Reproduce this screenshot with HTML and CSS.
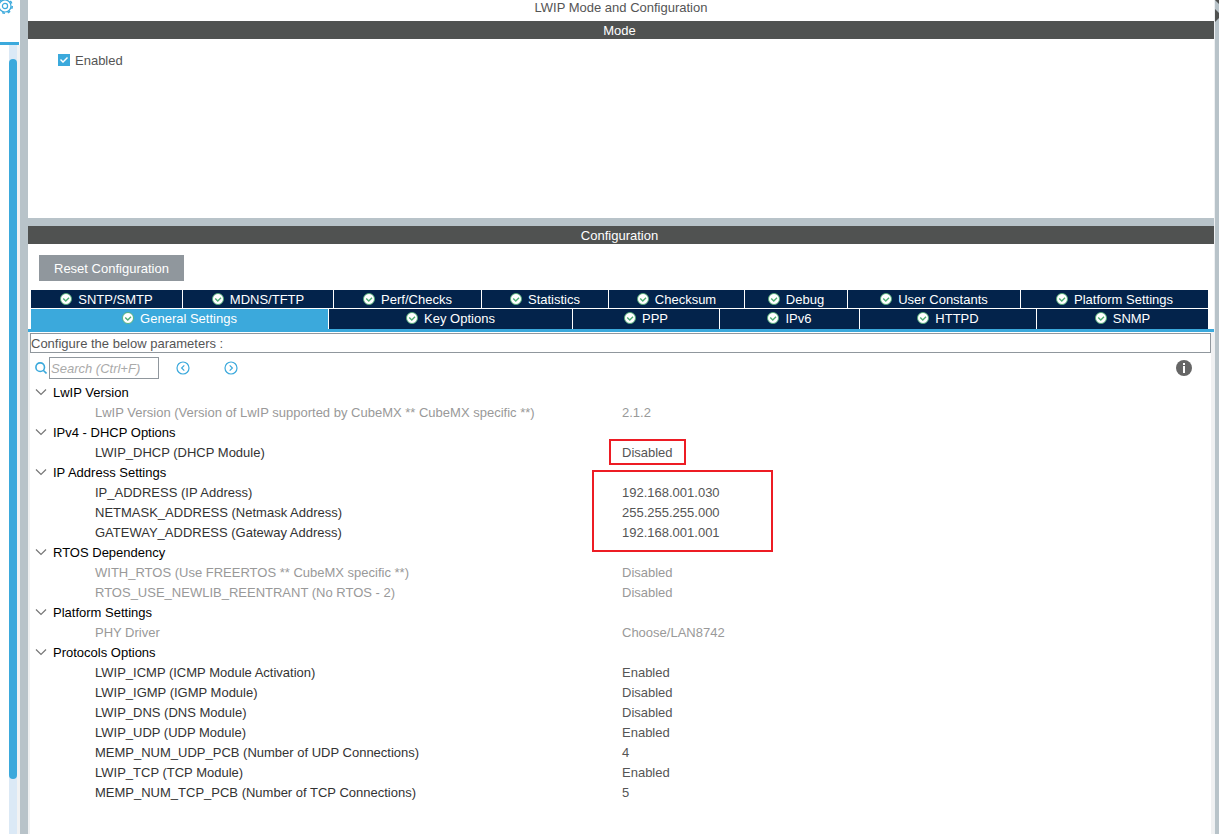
FILE: index.html
```html
<!DOCTYPE html>
<html lang="en">
<head>
  <meta charset="utf-8">
  <meta name="viewport" content="width=device-width, initial-scale=1.0">
  <title>LWIP Mode and Configuration</title>
  <link rel="stylesheet" href="styles.css">
</head>
<body>
  <!-- shared icons -->
  <svg class="defs" width="0" height="0" aria-hidden="true">
    <symbol id="ok" viewBox="0 0 12 12">
      <circle cx="6" cy="6" r="5.5" fill="#fff" stroke="#4fae74" stroke-width="0.9"/>
      <path d="M3.2 5.4l2.6 2.6L9 4.8" fill="none" stroke="#4fae74" stroke-width="1.4"/>
    </symbol>
    <symbol id="chevron" viewBox="0 0 12 8">
      <path d="M1 1.5l5 5 5-5" fill="none" stroke="#777" stroke-width="1.2"/>
    </symbol>
  </svg>

  <aside class="side">
    <div class="side-top">
      <svg width="14" height="15" viewBox="0 0 14 15" fill="none" stroke="#3ba9dc">
        <circle cx="5" cy="6" r="2.6" stroke-width="1.2"/>
        <circle cx="5" cy="6" r="6" stroke-width="1.2"/>
        <circle cx="5" cy="6" r="7.2" stroke-width="1.6" stroke-dasharray="2.8 2.85"/>
      </svg>
    </div>
    <div class="scroll-track"><div class="scroll-thumb"></div></div>
  </aside>

  <main>
    <h1>LWIP Mode and Configuration</h1>

    <!-- Mode -->
    <section class="mode">
      <h2>Mode</h2>
      <label class="check"><input type="checkbox" checked>Enabled</label>
    </section>

    <!-- Configuration -->
    <section class="config">
      <h2>Configuration</h2>
      <button class="reset">Reset Configuration</button>

      <div class="tabs" role="tablist">
        <div class="tab-row tab-row-back">
          <button role="tab"><svg class="ok"><use href="#ok"/></svg>SNTP/SMTP</button>
          <button role="tab"><svg class="ok"><use href="#ok"/></svg>MDNS/TFTP</button>
          <button role="tab"><svg class="ok"><use href="#ok"/></svg>Perf/Checks</button>
          <button role="tab"><svg class="ok"><use href="#ok"/></svg>Statistics</button>
          <button role="tab"><svg class="ok"><use href="#ok"/></svg>Checksum</button>
          <button role="tab"><svg class="ok"><use href="#ok"/></svg>Debug</button>
          <button role="tab"><svg class="ok"><use href="#ok"/></svg>User Constants</button>
          <button role="tab"><svg class="ok"><use href="#ok"/></svg>Platform Settings</button>
        </div>
        <div class="tab-row tab-row-front">
          <button role="tab" class="active" aria-selected="true"><svg class="ok"><use href="#ok"/></svg>General Settings</button>
          <button role="tab"><svg class="ok"><use href="#ok"/></svg>Key Options</button>
          <button role="tab"><svg class="ok"><use href="#ok"/></svg>PPP</button>
          <button role="tab"><svg class="ok"><use href="#ok"/></svg>IPv6</button>
          <button role="tab"><svg class="ok"><use href="#ok"/></svg>HTTPD</button>
          <button role="tab"><svg class="ok"><use href="#ok"/></svg>SNMP</button>
        </div>
      </div>

      <div class="panel">
        <p class="hint">Configure the below parameters :</p>

        <div class="toolbar">
          <label for="search" aria-label="Search">
            <svg width="12" height="12" viewBox="0 0 12 12" fill="none" stroke="#3ba9dc" stroke-width="1.6">
              <circle cx="5.2" cy="5.2" r="4.3"/><path d="M8.2 8.2l3.3 3.3"/>
            </svg>
          </label>
          <input type="text" id="search" placeholder="Search (Ctrl+F)">
          <button class="prev" aria-label="Previous">
            <svg width="14" height="14" viewBox="0 0 14 14" fill="none" stroke="#3ba9dc" stroke-width="1.2">
              <circle cx="7" cy="7" r="6"/><path d="M8.3 4.3L5.6 7l2.7 2.7"/>
            </svg>
          </button>
          <button class="next" aria-label="Next">
            <svg width="14" height="14" viewBox="0 0 14 14" fill="none" stroke="#3ba9dc" stroke-width="1.2">
              <circle cx="7" cy="7" r="6"/><path d="M5.7 4.3L8.4 7 5.7 9.7"/>
            </svg>
          </button>
          <button class="info" aria-label="Information">
            <svg width="16" height="16" viewBox="0 0 16 16">
              <circle cx="8" cy="8" r="8" fill="#666"/>
              <path d="M7 3h2v2H7zM7 6h2v7H7z" fill="#fff"/>
            </svg>
          </button>
        </div>

        <table class="params">
          <colgroup><col class="col-name"><col></colgroup>
          <tbody>
            <tr><th colspan="2"><button><svg class="chev"><use href="#chevron"/></svg>LwIP Version</button></th></tr>
            <tr class="off"><td>LwIP Version (Version of LwIP supported by CubeMX ** CubeMX specific **)</td><td>2.1.2</td></tr>
          </tbody>
          <tbody>
            <tr><th colspan="2"><button><svg class="chev"><use href="#chevron"/></svg>IPv4 - DHCP Options</button></th></tr>
            <tr><td>LWIP_DHCP (DHCP Module)</td><td><span class="mark mark-dhcp"></span>Disabled</td></tr>
          </tbody>
          <tbody>
            <tr><th colspan="2"><button><svg class="chev"><use href="#chevron"/></svg>IP Address Settings</button></th></tr>
            <tr><td>IP_ADDRESS (IP Address)</td><td><span class="mark mark-ip"></span>192.168.001.030</td></tr>
            <tr><td>NETMASK_ADDRESS (Netmask Address)</td><td>255.255.255.000</td></tr>
            <tr><td>GATEWAY_ADDRESS (Gateway Address)</td><td>192.168.001.001</td></tr>
          </tbody>
          <tbody>
            <tr><th colspan="2"><button><svg class="chev"><use href="#chevron"/></svg>RTOS Dependency</button></th></tr>
            <tr class="off"><td>WITH_RTOS (Use FREERTOS ** CubeMX specific **)</td><td>Disabled</td></tr>
            <tr class="off"><td>RTOS_USE_NEWLIB_REENTRANT (No RTOS - 2)</td><td>Disabled</td></tr>
          </tbody>
          <tbody>
            <tr><th colspan="2"><button><svg class="chev"><use href="#chevron"/></svg>Platform Settings</button></th></tr>
            <tr class="off"><td>PHY Driver</td><td>Choose/LAN8742</td></tr>
          </tbody>
          <tbody>
            <tr><th colspan="2"><button><svg class="chev"><use href="#chevron"/></svg>Protocols Options</button></th></tr>
            <tr><td>LWIP_ICMP (ICMP Module Activation)</td><td>Enabled</td></tr>
            <tr><td>LWIP_IGMP (IGMP Module)</td><td>Disabled</td></tr>
            <tr><td>LWIP_DNS (DNS Module)</td><td>Disabled</td></tr>
            <tr><td>LWIP_UDP (UDP Module)</td><td>Enabled</td></tr>
            <tr><td>MEMP_NUM_UDP_PCB (Number of UDP Connections)</td><td>4</td></tr>
            <tr><td>LWIP_TCP (TCP Module)</td><td>Enabled</td></tr>
            <tr><td>MEMP_NUM_TCP_PCB (Number of TCP Connections)</td><td>5</td></tr>
          </tbody>
        </table>
      </div>
    </section>
  </main>

  <div class="gutter">
    <svg width="4" height="22" viewBox="0 0 4 22" fill="#505251">
      <path d="M0 0h4v4zM0 9l4 4v5l-4 4z"/>
    </svg>
  </div>
</body>
</html>
```
FILE: styles.css
```css
* { box-sizing: border-box; }
body {
  margin: 0;
  min-height: 100vh;
  display: flex;
  background: #fff; color: #555;
  font: 13px/20px "Liberation Sans", Arial, sans-serif;
}
button, input { font: inherit; color: inherit; }
button { border: none; background: none; padding: 0; cursor: pointer; }
svg { display: block; }
.defs { position: absolute; }

/* Left strip with the scrollbar */
.side {
  flex: none;
  width: 28px;
  display: flex; flex-direction: column;
  border-right: 8px solid #b8c3c9;
}
.side-top {
  height: 45px;
  margin-right: 1px;
  border-bottom: 3px solid #3ba9dc;
}
.scroll-track {
  flex: 1;
  width: 8px; margin-left: 9px;
  padding: 14px 0 55px;
  display: flex;
  background: #dbe9f6;
  box-shadow: 3px 0 #f1f2f3;
}
.scroll-thumb { flex: 1; border-radius: 4px; background: #3ba9dc; }

main {
  flex: 1; min-width: 0;
  display: flex; flex-direction: column;
}
h1 {
  margin: 0; height: 21px;
  font-size: 13px; font-weight: normal; line-height: 15px;
  text-align: center;
}
h2 {
  margin: 0; padding: 2px 3px 0 0;
  background: #505251; color: #fff;
  font-size: 13px; font-weight: normal; line-height: 16px;
  text-align: center;
}

/* Mode */
.mode { height: 205px; border-bottom: 8px solid #b8c3c9; }
.check {
  display: inline-flex; align-items: center; gap: 5px;
  margin: 12px 0 0 30px;
}
.check input {
  appearance: none;
  width: 12px; height: 12px; margin: 0 0 2px;
  background: #3ba9dc;
}
.check input:checked::before {
  content: "";
  display: block;
  width: 12px; height: 12px;
  background: #fff;
  clip-path: polygon(2px 6px, 3px 5px, 5px 7px, 9px 3px, 10px 4px, 5px 9px);
}

/* Configuration */
.config { flex: 1; display: flex; flex-direction: column; }
.reset {
  align-self: flex-start;
  margin: 11px; margin-bottom: 9px;
  padding: 4px 15px 2px;
  background: #90979d; color: #fff;
}

/* Tabs */
.tabs { border-bottom: 3px solid #3ba9dc; padding: 0 6px 0 3px; }
.tab-row { display: grid; column-gap: 1px; margin-bottom: 1px; }
.tab-row-back { grid-template-columns: 151fr 150fr 147fr 126fr 135fr 102fr 172fr 187fr; }
.tab-row-front { grid-template-columns: 297fr 243fr 146fr 139fr 176fr 171fr; margin-bottom: 0; }
.tab-row button {
  display: flex; align-items: center; justify-content: center; gap: 6px;
  min-width: 0;
  padding-top: 2px;
  background: #03234b; color: #fff;
  line-height: 16px; white-space: nowrap;
}
.tab-row-front button { padding-bottom: 2px; }
.tab-row button.active { background: #3ba9dc; }
.ok { width: 12px; height: 12px; margin-bottom: 2px; }

.panel {
  flex: 1;
  padding-top: 1px;
  border: solid #f0f1f2; border-width: 0 3px 0 2px;
}
.hint {
  margin: 0; padding-top: 2px;
  border: 1px solid #90979d;
  line-height: 16px;
}
.toolbar {
  display: flex; align-items: center;
  padding: 4px 19px 3px 5px;
}
.toolbar input {
  width: 110px; height: 22px;
  margin-left: 2px; padding: 0 1px;
  border: 1px solid #90979d;
  background: #fff;
}
.toolbar input::placeholder { color: #aaa; font-style: italic; opacity: 1; }
.prev { margin-left: 17px; }
.next { margin-left: 34px; }
.info { margin-left: auto; }

/* Parameter tree */
.params { width: 100%; border-collapse: collapse; table-layout: fixed; }
.params th, .params td { padding: 2px 0 0; height: 20px; line-height: 18px; text-align: left; white-space: nowrap; }
.params th { font-weight: normal; color: #000; }
.params th button { display: flex; align-items: center; gap: 6px; padding-left: 5px; }
.params td:first-child { padding-left: 65px; color: #333; }
.params td:last-child { position: relative; }
.params .off td { color: #999; }
.col-name { width: 592px; }
.chev { width: 12px; height: 8px; margin-bottom: 2px; }

.mark {
  position: absolute; left: -13px; top: -3px;
  border: 2px solid #ed1c24;
  pointer-events: none;
}
.mark-dhcp { width: 77px; height: 26px; }
.mark-ip { left: -30px; top: -12px; width: 181px; height: 82px; }

/* Right edge */
.gutter {
  flex: none;
  width: 5px;
  border-left: 1px solid #eef0f2;
  background: #b8c3c9;
}
```
